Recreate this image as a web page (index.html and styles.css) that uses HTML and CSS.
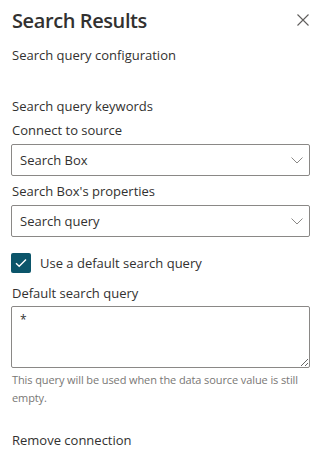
FILE: index.html
```html
<!DOCTYPE html>
<html lang="en">
<head>
    <meta charset="UTF-8">
    <meta name="viewport" content="width=device-width, initial-scale=1.0">
    <title>Search Results</title>
    <link rel="stylesheet" href="styles.css">
</head>
<body>
    <div class="panel">
        <div class="panel-header">
            <h1>Search Results</h1>
            <button class="close-button" aria-label="Close">
                <svg width="12" height="12" viewBox="0 0 12 12">
                    <path d="M0.5 0.5 L11.5 11.5 M11.5 0.5 L0.5 11.5" stroke="#605e5c" stroke-width="1.1" fill="none"/>
                </svg>
            </button>
        </div>

        <p class="description">Search query configuration</p>

        <div class="section">
            <p class="section-title">Search query keywords</p>

            <label class="field-label">Connect to source</label>
            <div class="dropdown">
                <span>Search Box</span>
                <svg class="chevron" width="12" height="7" viewBox="0 0 12 7">
                    <path d="M0.5 0.5 L6 6 L11.5 0.5" stroke="#8a8886" stroke-width="1" fill="none"/>
                </svg>
            </div>

            <label class="field-label gap-top">Search Box's properties</label>
            <div class="dropdown">
                <span>Search query</span>
                <svg class="chevron" width="12" height="7" viewBox="0 0 12 7">
                    <path d="M0.5 0.5 L6 6 L11.5 0.5" stroke="#8a8886" stroke-width="1" fill="none"/>
                </svg>
            </div>

            <div class="checkbox-row">
                <span class="checkbox">
                    <svg width="12" height="10" viewBox="0 0 12 10">
                        <path d="M1 5.2 L4.2 8.3 L11 1.5" stroke="white" stroke-width="1.4" fill="none"/>
                    </svg>
                </span>
                <span class="checkbox-label">Use a default search query</span>
            </div>

            <label class="field-label default-label">Default search query</label>
            <textarea class="query-input">*</textarea>
            <p class="helper">This query will be used when the data source value is still empty.</p>
        </div>

        <p class="remove-link">Remove connection</p>
    </div>
</body>
</html>
```

FILE: styles.css
```css
* {
    margin: 0;
    padding: 0;
    box-sizing: border-box;
}

body {
    font-family: 'Segoe UI', 'Open Sans', sans-serif;
    font-size: 13px;
    color: #323130;
    background-color: white;
}

.panel {
    width: 331px;
    padding: 0 21px 0 11px;
}

.panel-header {
    height: 40px;
    display: flex;
    align-items: center;
    justify-content: space-between;
}

.panel-header h1 {
    font-size: 20px;
    font-weight: 600;
    letter-spacing: -0.4px;
    padding-left: 1px;
}

.close-button {
    background: none;
    border: none;
    width: 12px;
    height: 12px;
    display: flex;
    margin-right: 1px;
}

.description {
    margin-top: 5px;
    line-height: 20px;
    padding-left: 1px;
}

.section {
    margin-top: 31px;
    display: flex;
    flex-direction: column;
}

.section-title,
.field-label {
    line-height: 20px;
    padding-left: 1px;
}

.field-label {
    margin-top: 4px;
    margin-bottom: 4px;
}

.field-label.gap-top {
    margin-top: 5px;
}

.dropdown {
    height: 32px;
    border: 1px solid #8a8886;
    border-radius: 2px;
    display: flex;
    align-items: center;
    justify-content: space-between;
    padding: 0 6px 0 8px;
}

.checkbox-row {
    margin-top: 16px;
    display: flex;
    align-items: center;
    gap: 9px;
    height: 20px;
}

.checkbox {
    width: 20px;
    height: 20px;
    border-radius: 2px;
    background-color: #0b556a;
    display: flex;
    align-items: center;
    justify-content: center;
}

.field-label.default-label {
    margin-top: 10px;
    margin-bottom: 3px;
}

.query-input {
    height: 62px;
    border: 1px solid #8a8886;
    border-radius: 2px;
    padding: 4px 8px;
    font-family: inherit;
    font-size: 12px;
    color: #323130;
    resize: vertical;
}

.helper {
    margin-top: 3px;
    font-size: 11px;
    line-height: 18px;
    letter-spacing: -0.1px;
    color: #797775;
    padding-left: 1px;
}

.remove-link {
    margin-top: 23px;
    line-height: 20px;
    padding-left: 1px;
}
```
